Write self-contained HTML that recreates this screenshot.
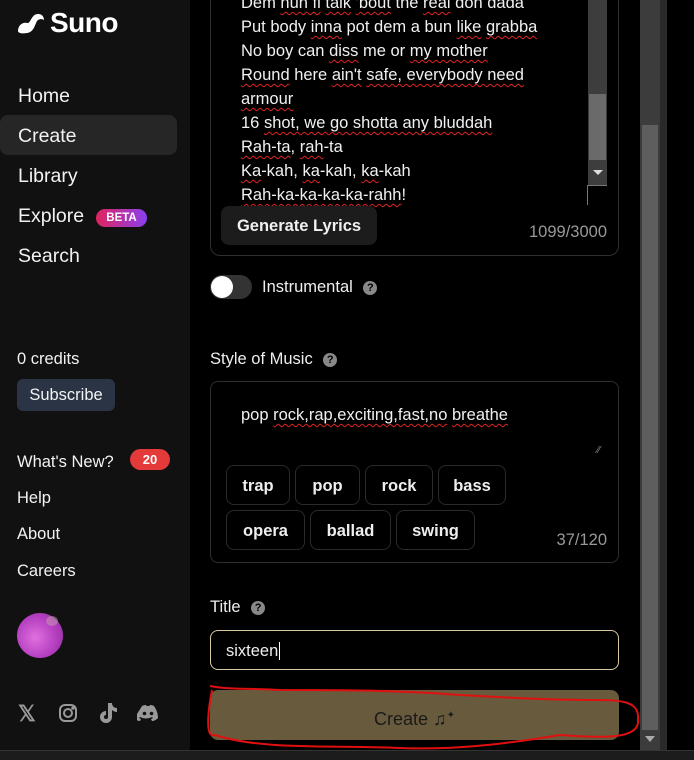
<!DOCTYPE html>
<html><head><meta charset="utf-8"><style>
*{box-sizing:border-box;margin:0;padding:0}
body{width:694px;height:760px;background:#000;font-family:"Liberation Sans",sans-serif;color:#eee;position:relative;overflow:hidden}
.a{position:absolute}
#side{left:0;top:0;width:190px;height:750px;background:#111}
.nav{position:absolute;left:18px;font-size:19.5px;color:#f2f2f2}
.sm{position:absolute;left:17px;font-size:16.5px;color:#f2f2f2}
.lyr{position:absolute;left:241px;font-size:16.5px;color:#f0f0f0;white-space:nowrap}
.sq{text-decoration:underline wavy #d22;text-decoration-thickness:1px;text-underline-offset:3px}
.tag{position:absolute;height:40px;border:1px solid #2a2a2a;border-radius:8px;font-weight:bold;font-size:16.5px;color:#eee;text-align:center;line-height:40px}
.q{display:inline-block;width:14px;height:14px;border-radius:50%;background:#888;color:#000;font-size:11px;font-weight:bold;text-align:center;line-height:14px;vertical-align:middle}
</style></head><body>
<div id="side" class="a"></div>
<svg class="a" style="left:16px;top:11px" width="30" height="26" viewBox="0 0 30 26"><path d="M2 20c0-6 5-9 9-8 4 1 4-9 11-9 5 0 6 4 6 6 0 0-3-2-6 0-3 2-3 12-11 13-5 1-9 0-9-2z" fill="#fff"/></svg>
<div class="a" style="left:50px;top:7px;font-size:28px;font-weight:bold;color:#fff;letter-spacing:-0.5px">Suno</div>
<div class="a" style="left:0;top:115px;width:177px;height:40px;background:#262626;border-radius:8px"></div>
<div class="nav" style="top:85px">Home</div>
<div class="nav" style="top:125px">Create</div>
<div class="nav" style="top:165px">Library</div>
<div class="nav" style="top:205px">Explore</div>
<div class="a" style="left:96px;top:209px;width:51px;height:18px;border-radius:9px;background:linear-gradient(90deg,#e0245e,#8a3ff0);font-size:11.5px;font-weight:bold;text-align:center;line-height:18px;color:#fff">BETA</div>
<div class="nav" style="top:245px">Search</div>
<div class="sm" style="top:350px">0 credits</div>
<div class="a" style="left:17px;top:379px;width:98px;height:32px;background:#2a3444;border-radius:6px;font-size:16.5px;text-align:center;line-height:33px;color:#f2f2f2">Subscribe</div>
<div class="sm" style="top:453px">What's New?</div>
<div class="a" style="left:130px;top:449px;width:40px;height:21px;border-radius:11px;background:#e53a3a;font-size:13px;font-weight:bold;text-align:center;line-height:21px;color:#fff">20</div>
<div class="sm" style="top:489px">Help</div>
<div class="sm" style="top:525px">About</div>
<div class="sm" style="top:562px">Careers</div>
<div class="a" style="left:17px;top:613px;width:46px;height:45px;border-radius:50%;background:radial-gradient(circle at 40% 55%,#e070e0,#b53fc0 55%,#8a2a9a);"></div>
<div class="a" style="left:46px;top:616px;width:12px;height:10px;border-radius:50%;background:#c9a0b0;opacity:.5"></div>
<div class="a" style="left:18px;top:701px;font-size:22px;color:#999;font-weight:bold">𝕏</div>
<svg class="a" style="left:58px;top:703px" width="20" height="20" viewBox="0 0 20 20" fill="none" stroke="#999" stroke-width="2"><rect x="2" y="2" width="16" height="16" rx="5"/><circle cx="10" cy="10" r="4"/><circle cx="15" cy="5" r=".8" fill="#999"/></svg>
<svg class="a" style="left:98px;top:702px" width="20" height="22" viewBox="0 0 20 22"><path d="M10 1h4c0 3 2 5 5 5v4c-2 0-4-1-5-2v7a6 6 0 1 1-6-6v4a2 2 0 1 0 2 2z" fill="#999"/></svg>
<svg class="a" style="left:137px;top:705px" width="22" height="16" viewBox="0 0 22 16"><path d="M5 1c2-1 4-1 4-1l.5 1h3L13 0s2 0 4 1c2 3 4 7 4 12-2 2-4 3-6 3l-1-2 2-1-1-1c-4 2-8 2-12 0l-1 1 2 1-1 2c-2 0-4-1-6-3C1 8 3 4 5 1z" fill="#999"/><circle cx="7.5" cy="8.5" r="1.8" fill="#111"/><circle cx="14.5" cy="8.5" r="1.8" fill="#111"/></svg>

<div class="a" style="left:210px;top:-10px;width:409px;height:266px;border:1px solid #2e2e2e;border-radius:10px"></div>
<div class="lyr" style="top:-6px">Dem <span class="sq">nun fi</span> <span class="sq">talk</span> <span class="sq">'bout</span> the <span class="sq">real</span> don dada</div>
<div class="lyr" style="top:18px">Put body <span class="sq">inna</span> pot dem a bun <span class="sq">like</span> <span class="sq">grabba</span></div>
<div class="lyr" style="top:42px">No boy can <span class="sq">diss</span> me or <span class="sq">my mother</span></div>
<div class="lyr" style="top:66px"><span class="sq">Round</span> here <span class="sq">ain't</span> <span class="sq">safe, everybody need</span></div>
<div class="lyr" style="top:90px"><span class="sq">armour</span></div>
<div class="lyr" style="top:114px">16 <span class="sq">shot, we go shotta any bluddah</span></div>
<div class="lyr" style="top:138px"><span class="sq">Rah-ta</span>, <span class="sq">rah</span>-ta</div>
<div class="lyr" style="top:162px"><span class="sq">Ka</span>-kah, <span class="sq">ka</span>-kah, <span class="sq">ka</span>-kah</div>
<div class="lyr" style="top:186px"><span class="sq">Rah-ka-ka-ka-ka-rahh</span>!</div>
<div class="a" style="left:588px;top:0;width:19px;height:185px;background:#3d3d3d"></div>
<div class="a" style="left:589px;top:94px;width:17px;height:66px;background:#6a6a6a"></div>
<div class="a" style="left:593px;top:170px;width:0;height:0;border-left:5px solid transparent;border-right:5px solid transparent;border-top:5px solid #ddd"></div>
<div class="a" style="left:587px;top:185px;width:20px;height:20px;border:1px solid #777;border-right:none;border-bottom:none"></div>
<div class="a" style="left:221px;top:206px;width:156px;height:39px;background:#1c1c1c;border-radius:8px;font-weight:bold;font-size:16.5px;text-align:center;line-height:41px;color:#f0f0f0">Generate Lyrics</div>
<div class="a" style="left:500px;top:223px;width:107px;text-align:right;font-size:16.5px;color:#999">1099/3000</div>

<div class="a" style="left:210px;top:275px;width:42px;height:24px;border-radius:12px;background:#333"></div>
<div class="a" style="left:211px;top:276px;width:22px;height:22px;border-radius:50%;background:#fff"></div>
<div class="a" style="left:262px;top:278px;font-size:16.5px">Instrumental <span class="q" style="margin-left:6px">?</span></div>

<div class="a" style="left:210px;top:350px;font-size:16.5px">Style of Music <span class="q" style="margin-left:6px">?</span></div>
<div class="a" style="left:210px;top:381px;width:409px;height:182px;border:1px solid #2e2e2e;border-radius:8px"></div>
<div class="lyr" style="top:406px">pop <span class="sq">rock,rap,exciting,fast,no</span> <span class="sq">breathe</span></div>
<div class="a" style="left:597px;top:445px;font-size:10px;color:#888">⁄⁄</div>
<div class="tag" style="left:226px;top:465px;width:64px">trap</div>
<div class="tag" style="left:295px;top:465px;width:65px">pop</div>
<div class="tag" style="left:365px;top:465px;width:68px">rock</div>
<div class="tag" style="left:438px;top:465px;width:68px">bass</div>
<div class="tag" style="left:226px;top:510px;width:79px">opera</div>
<div class="tag" style="left:310px;top:510px;width:81px">ballad</div>
<div class="tag" style="left:396px;top:510px;width:79px">swing</div>
<div class="a" style="left:520px;top:531px;width:87px;text-align:right;font-size:16.5px;color:#999">37/120</div>

<div class="a" style="left:210px;top:598px;font-size:16.5px">Title <span class="q" style="margin-left:6px">?</span></div>
<div class="a" style="left:210px;top:630px;width:409px;height:40px;border:1.5px solid #d9c9a3;border-radius:8px;font-size:16.5px;line-height:40px;padding-left:15px">sixteen<span style="border-left:1px solid #fff;margin-left:1px"></span></div>
<div class="a" style="left:210px;top:690px;width:409px;height:50px;background:#685a3c;border-radius:8px;font-size:18px;text-align:center;line-height:52px;color:#1a1a1a">Create ♫<sup style="font-size:10px">✦</sup></div>
<svg class="a" style="left:0;top:0" width="694" height="760"><path d="M212 690 C210 700 203 740 215 735 C260 750 330 745 400 748 C450 750 500 745 560 735 C600 738 640 740 638 720 C640 700 620 700 590 700 C540 700 500 697 460 695 C400 690 330 690 280 690 C250 688 230 690 210 686" fill="none" stroke="#e01010" stroke-width="2"/></svg>

<div class="a" style="left:640px;top:0;width:20px;height:750px;background:#3c3c3c"></div>
<div class="a" style="left:642px;top:125px;width:16px;height:605px;background:#5e5e5e"></div>
<div class="a" style="left:645px;top:736px;width:0;height:0;border-left:5px solid transparent;border-right:5px solid transparent;border-top:6px solid #aaa"></div>
<div class="a" style="left:660px;top:0;width:7px;height:750px;background:#2a2a2a"></div>
<div class="a" style="left:0;top:750px;width:694px;height:10px;background:#1c1c1c;border-top:1px solid #333"></div>
</body></html>
